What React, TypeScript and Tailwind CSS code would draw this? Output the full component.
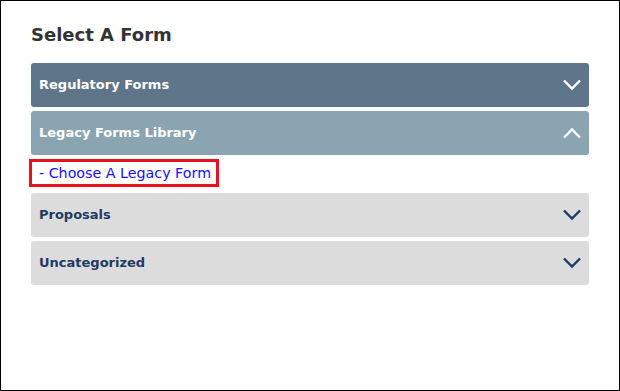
import React from "react";

function Chevron({ up, color }: { up?: boolean; color: string }) {
  return (
    <svg width="20" height="12" viewBox="0 0 20 12" className="shrink-0">
      <path
        d={up ? "M2 10.5 L10 2.5 L18 10.5" : "M2 1.5 L10 9.5 L18 1.5"}
        fill="none"
        stroke={color}
        strokeWidth="2.4"
      />
    </svg>
  );
}

function Panel({
  title,
  bg,
  fg,
  up,
}: {
  title: string;
  bg: string;
  fg: string;
  up?: boolean;
}) {
  return (
    <div
      className={`h-[44px] rounded-[3px] flex items-center justify-between pl-[8px] pr-[7px] ${bg}`}
    >
      <span className={`text-[13px] font-bold ${fg}`}>{title}</span>
      <Chevron up={up} color={fg === "text-white" ? "#ffffff" : "#1c3b63"} />
    </div>
  );
}

export default function App() {
  return (
    <div
      className="w-[620px] h-[391px] border border-black bg-white"
      style={{ fontFamily: '"DejaVu Sans", Verdana, sans-serif' }}
    >
      <div className="pl-[30px] pr-[30px] pt-[22px]">
        <h1 className="text-[18px] font-bold text-[#333333] leading-[24px]">
          Select A Form
        </h1>
        <div className="mt-[16px] flex flex-col gap-[4px]">
          <Panel title="Regulatory Forms" bg="bg-[#5f7589]" fg="text-white" />
          <Panel
            title="Legacy Forms Library"
            bg="bg-[#8aa4b1]"
            fg="text-white"
            up
          />
          <div className="pb-[2px]">
            <a
              href="#"
              className="inline-block ml-[-2px] border-[3px] border-[#e8111f] pl-[7px] pr-[5px] h-[28px] leading-[22px] text-[14.25px] text-[#1a0dff]"
            >
              - Choose A Legacy Form
            </a>
          </div>
          <Panel title="Proposals" bg="bg-[#dcdcdc]" fg="text-[#1c3b63]" />
          <Panel title="Uncategorized" bg="bg-[#dcdcdc]" fg="text-[#1c3b63]" />
        </div>
      </div>
    </div>
  );
}
